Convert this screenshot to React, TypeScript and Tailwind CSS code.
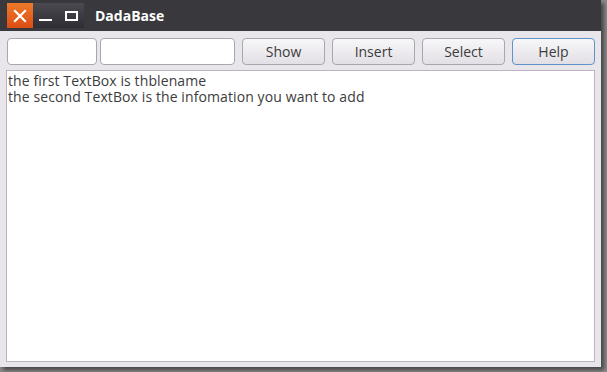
import React from "react";

const font = { fontFamily: '"Open Sans", "Noto Sans", "DejaVu Sans", sans-serif' };

function Btn({ label, focused }: { label: string; focused?: boolean }) {
  return (
    <div
      className={`w-[83px] h-[27px] flex items-center justify-center rounded-[4px] border text-[14px] text-[#3c3c3c] bg-gradient-to-b from-[#f7f6f8] to-[#e2e0e5] ${
        focused ? "border-[#5f93c9]" : "border-[#aaa6b0]"
      }`}
    >
      {label}
    </div>
  );
}

export default function App() {
  return (
    <div className="w-[607px] h-[372px] bg-[#8a8a8a] relative overflow-hidden" style={font}>
      <div className="w-[601px] h-[367px] flex flex-col bg-[#e8e6eb] shadow-[3px_3px_4px_rgba(0,0,0,0.5)]">
        {/* title bar */}
        <div className="h-[31px] bg-[#39383d] flex items-center pl-[7px]">
          <div className="flex h-[25px]">
            <div className="w-[26px] h-[25px] bg-gradient-to-b from-[#ec7a2a] to-[#dd4c14] flex items-center justify-center">
              <svg width="14" height="14" viewBox="0 0 14 14">
                <path d="M2 2 L12 12 M12 2 L2 12" stroke="#fff" strokeWidth="2.2" strokeLinecap="square" />
              </svg>
            </div>
            <div className="w-[51px] h-[25px] bg-gradient-to-b from-[#4b4a50] to-[#2e2d33] relative">
              <div className="absolute left-[6px] top-[16px] w-[13px] h-[2px] bg-white" />
              <div className="absolute left-[32px] top-[8px] w-[13px] h-[10px] border-2 border-white" />
            </div>
          </div>
          <div className="ml-[11px] text-white font-bold text-[14px] leading-none">DadaBase</div>
        </div>
        {/* toolbar */}
        <div className="flex items-center h-[39px] pl-[7px] pt-[1px]">
          <div className="w-[90px] h-[27px] bg-white border border-[#aaa6b0] rounded-[4px]" />
          <div className="ml-[3px] w-[135px] h-[27px] bg-white border border-[#aaa6b0] rounded-[4px]" />
          <div className="ml-[7px] flex gap-[7px]">
            <Btn label="Show" />
            <Btn label="Insert" />
            <Btn label="Select" />
            <Btn label="Help" focused />
          </div>
        </div>
        {/* text area */}
        <div className="mx-[6px] h-[292px] bg-white border border-[#b9b4c0] px-[1px] pt-[2px] text-[14px] leading-[16px] tracking-[0.1px] text-[#3c3c3c]">
          <div>the first TextBox is thblename</div>
          <div>the second TextBox is the infomation you want to add</div>
        </div>
      </div>
    </div>
  );
}
